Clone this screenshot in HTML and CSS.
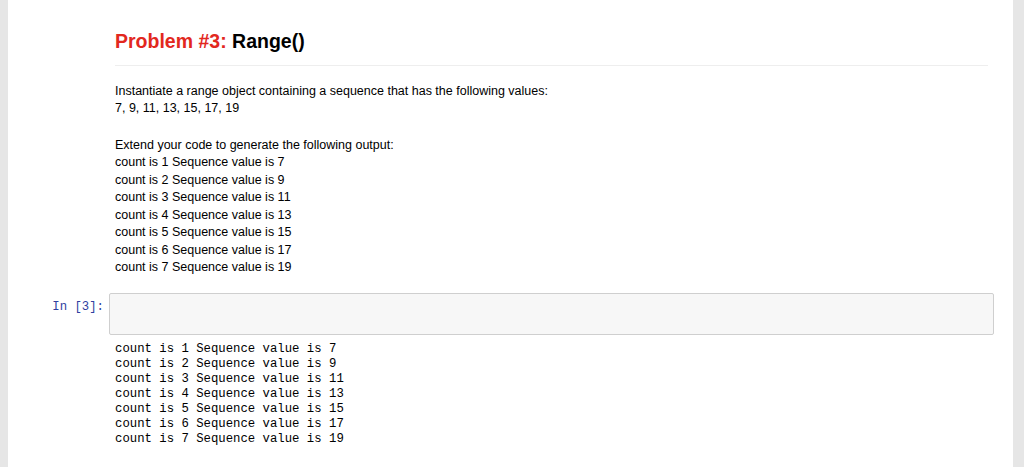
FILE: index.html
```html
<!DOCTYPE html>
<html>
<head>
<meta charset="utf-8">
<link rel="stylesheet" href="styles.css">
</head>
<body>
<div class="page">
  <div class="md-cell">
    <h1 class="title"><span class="red">Problem #3:</span> Range()</h1>
    <hr class="rule">
    <p class="para">Instantiate a range object containing a sequence that has the following values:<br>7, 9, 11, 13, 15, 17, 19</p>
    <p class="para">Extend your code to generate the following output:<br>count is 1 Sequence value is 7<br>count is 2 Sequence value is 9<br>count is 3 Sequence value is 11<br>count is 4 Sequence value is 13<br>count is 5 Sequence value is 15<br>count is 6 Sequence value is 17<br>count is 7 Sequence value is 19</p>
  </div>
  <div class="code-cell">
    <div class="prompt">In [3]:</div>
    <div class="input-box"></div>
  </div>
  <pre class="output">count is 1 Sequence value is 7
count is 2 Sequence value is 9
count is 3 Sequence value is 11
count is 4 Sequence value is 13
count is 5 Sequence value is 15
count is 6 Sequence value is 17
count is 7 Sequence value is 19</pre>
</div>
</body>
</html>
```
FILE: styles.css
```css
html, body {
  margin: 0;
  padding: 0;
  height: 100%;
}
body {
  background: #e6e6e6;
  overflow: hidden;
}
.page {
  margin: 0 11px 0 8px;
  height: 100%;
  background: #ffffff;
  box-sizing: border-box;
  padding-top: 29px;
}
.md-cell {
  padding-left: 107px;
  padding-right: 25px;
  font-family: "Liberation Sans", Arial, sans-serif;
  color: #000;
}
.title {
  margin: 0;
  font-size: 19.5px;
  font-weight: bold;
  line-height: 24px;
}
.red {
  color: #e2281e;
}
.rule {
  border: 0;
  border-top: 1px solid #eeeeee;
  margin: 12px 0 0 0;
}
.para {
  margin: 17px 0 0 0;
  font-size: 12.5px;
  line-height: 17.45px;
}
.para + .para {
  margin-top: 19px;
}
.code-cell {
  display: flex;
  margin-top: 16px;
  margin-right: 19px;
}
.prompt {
  width: 101px;
  flex: none;
  text-align: right;
  padding-right: 5px;
  box-sizing: border-box;
  padding-top: 7px;
  font-family: "Liberation Mono", "Courier New", monospace;
  font-size: 12.3px;
  color: #303f9f;
}
.input-box {
  flex: 1;
  height: 40px;
  background: #f7f7f7;
  border: 1px solid #cfcfcf;
  border-radius: 2px;
}
.output {
  margin: 7px 0 0 107px;
  font-family: "Liberation Mono", "Courier New", monospace;
  font-size: 12.3px;
  line-height: 15px;
  color: #000;
}
```
